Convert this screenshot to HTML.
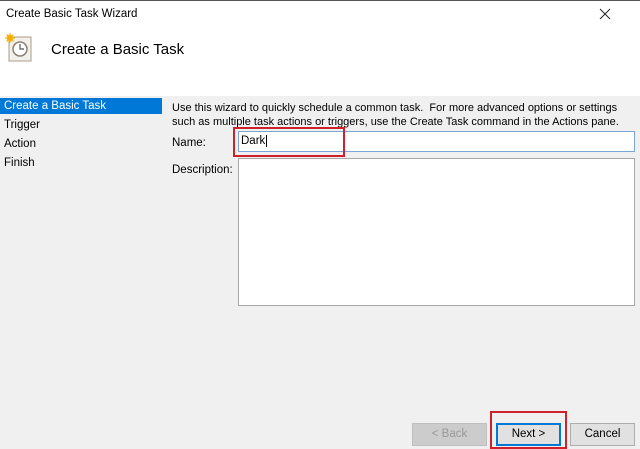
<!DOCTYPE html>
<html><head><style>
body{margin:0;width:640px;height:449px;overflow:hidden;background:#f0f0f0;font-family:"Liberation Sans",sans-serif;font-size:11px;color:#000;position:relative}
.a{position:absolute}
.top{left:0;top:0;width:640px;height:96px;background:#fff;border-top:1px solid #555;box-sizing:border-box}
.btn{position:absolute;top:423px;height:23px;box-sizing:border-box;border:1px solid #adadad;background:#e1e1e1;text-align:center;line-height:21px;font-size:11.5px}
</style></head><body>
<div class="a top"></div>
<div class="a" style="left:6px;top:8px;font-size:11.5px">Create Basic Task Wizard</div>
<svg class="a" style="left:599px;top:8px" width="12" height="12" viewBox="0 0 12 12"><path d="M1 1L11 11M11 1L1 11" stroke="#222" stroke-width="1"/></svg>
<svg class="a" style="left:4px;top:33px" width="30" height="30" viewBox="0 0 30 30">
<rect x="5" y="4" width="22" height="24" fill="#f2f0ea" stroke="#a89c88"/>
<circle cx="16" cy="16" r="7" fill="#fff" stroke="#8a8070" stroke-width="1.5"/>
<path d="M16 11v5h4" stroke="#555" fill="none" stroke-width="1.2"/>
<circle cx="6" cy="5" r="3.5" fill="#f6c020"/>
<path d="M6 0v10M1 5h10M2.5 1.5l7 7M9.5 1.5l-7 7" stroke="#f6a800" stroke-width="1"/>
</svg>
<div class="a" style="left:51px;top:41px;font-size:15px">Create a Basic Task</div>
<div class="a" style="left:0;top:98px;width:162px;height:16px;background:#0078d7;color:#fff;line-height:16px;padding-left:4px;box-sizing:border-box;font-size:11.5px">Create a Basic Task</div>
<div class="a" style="left:4px;top:119px;font-size:11.5px">Trigger</div>
<div class="a" style="left:4px;top:138px;font-size:11.5px">Action</div>
<div class="a" style="left:4px;top:157px;font-size:11.5px">Finish</div>
<div class="a" style="left:172px;top:101px;line-height:14px">Use this wizard to quickly schedule a common task.&nbsp; For more advanced options or settings<br>such as multiple task actions or triggers, use the Create Task command in the Actions pane.</div>
<div class="a" style="left:172px;top:137px;font-size:11.5px">Name:</div>
<div class="a" style="left:238px;top:131px;width:397px;height:21px;background:#fff;border:1px solid #7aa7d8;box-sizing:border-box"></div>
<div class="a" style="left:241px;top:135px;font-size:11.5px">Dark<span style="border-left:1px solid #000;margin-left:1px"></span></div>
<div class="a" style="left:233px;top:127px;width:112px;height:30px;border:2px solid #d0202a;box-sizing:border-box"></div>
<div class="a" style="left:172px;top:164px;font-size:11.5px">Description:</div>
<div class="a" style="left:238px;top:158px;width:397px;height:148px;background:#fff;border:1px solid #a8a8a8;box-sizing:border-box"></div>
<div class="btn" style="left:412px;width:75px;color:#999;background:#ccc;border-color:#bfbfbf">&lt; Back</div>
<div class="btn" style="left:496px;width:65px;border:2px solid #0078d7;line-height:19px">Next &gt;</div>
<div class="a" style="left:490px;top:411px;width:77px;height:38px;border:2px solid #d0202a;box-sizing:border-box"></div>
<div class="btn" style="left:570px;width:65px">Cancel</div>
</body></html>
